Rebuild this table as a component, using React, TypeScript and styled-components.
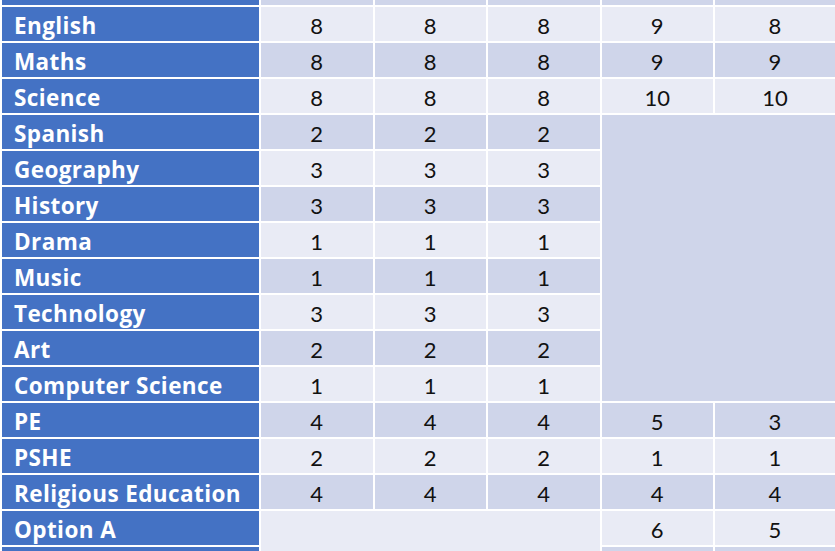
import React from 'react';
import styled, { createGlobalStyle } from 'styled-components';

const GlobalStyle = createGlobalStyle`
  html, body {
    margin: 0;
    padding: 0;
    background: #ffffff;
    overflow: hidden;
  }
  body {
    font-family: Lato, "Open Sans", "Liberation Sans", sans-serif;
  }
`;

const colors = {
  blue: '#4472C4',
  light: '#E9EBF5',
  dark: '#CFD5EA',
  line: '#FFFFFF',
  text: '#111111',
};

const Page = styled.div`
  width: 835px;
  height: 551px;
  overflow: hidden;
  padding-left: 2px;
  box-sizing: border-box;
  background: ${colors.line};
`;

const Table = styled.div`
  display: grid;
  grid-template-columns: 257px repeat(4, 111.5px) 120px;
  grid-template-rows: 5px;
  grid-auto-rows: 34px;
  gap: 2px;
  width: max-content;
`;

const Label = styled.div`
  background-color: ${colors.blue};
  color: #ffffff;
  font-family: "Open Sans", Lato, sans-serif;
  font-weight: 700;
  font-size: 22.5px;
  letter-spacing: 0.4px;
  display: flex;
  align-items: center;
  padding: 3px 0 0 12px;
  box-sizing: border-box;
  white-space: nowrap;
  overflow: hidden;
`;

const Cell = styled.div<{ $dark?: boolean; $cols?: number; $rows?: number }>`
  background-color: ${p => (p.$dark ? colors.dark : colors.light)};
  color: ${colors.text};
  font-size: 22px;
  display: flex;
  align-items: center;
  justify-content: center;
  padding-top: 3px;
  box-sizing: border-box;
  overflow: hidden;
  grid-column: span ${p => p.$cols || 1};
  grid-row: span ${p => p.$rows || 1};
`;

type Row = {
  subject: string;
  values: (number | null)[];
};

const rows: Row[] = [
  { subject: 'English', values: [8, 8, 8, 9, 8] },
  { subject: 'Maths', values: [8, 8, 8, 9, 9] },
  { subject: 'Science', values: [8, 8, 8, 10, 10] },
  { subject: 'Spanish', values: [2, 2, 2] },
  { subject: 'Geography', values: [3, 3, 3] },
  { subject: 'History', values: [3, 3, 3] },
  { subject: 'Drama', values: [1, 1, 1] },
  { subject: 'Music', values: [1, 1, 1] },
  { subject: 'Technology', values: [3, 3, 3] },
  { subject: 'Art', values: [2, 2, 2] },
  { subject: 'Computer Science', values: [1, 1, 1] },
  { subject: 'PE', values: [4, 4, 4, 5, 3] },
  { subject: 'PSHE', values: [2, 2, 2, 1, 1] },
  { subject: 'Religious Education', values: [4, 4, 4, 4, 4] },
];

const App: React.FC = () => {
  return (
    <Page>
      <GlobalStyle />
      <Table>
        {/* header row, mostly cut off at the top */}
        <Label />
        {[0, 1, 2, 3, 4].map(i => (
          <Cell key={`h${i}`} $dark />
        ))}

        {rows.map((row, index) => {
          const dark = index % 2 === 1;
          return (
            <React.Fragment key={row.subject}>
              <Label>{row.subject}</Label>
              {row.values.map((v, i) => (
                <Cell key={i} $dark={dark}>{v}</Cell>
              ))}
              {row.subject === 'Spanish' && <Cell $dark $cols={2} $rows={8} />}
            </React.Fragment>
          );
        })}

        {/* option rows */}
        <Label>Option A</Label>
        <Cell $cols={3} $rows={2} />
        <Cell>6</Cell>
        <Cell>5</Cell>

        <Label />
        <Cell $dark />
        <Cell $dark />
      </Table>
    </Page>
  );
};

export default App;
